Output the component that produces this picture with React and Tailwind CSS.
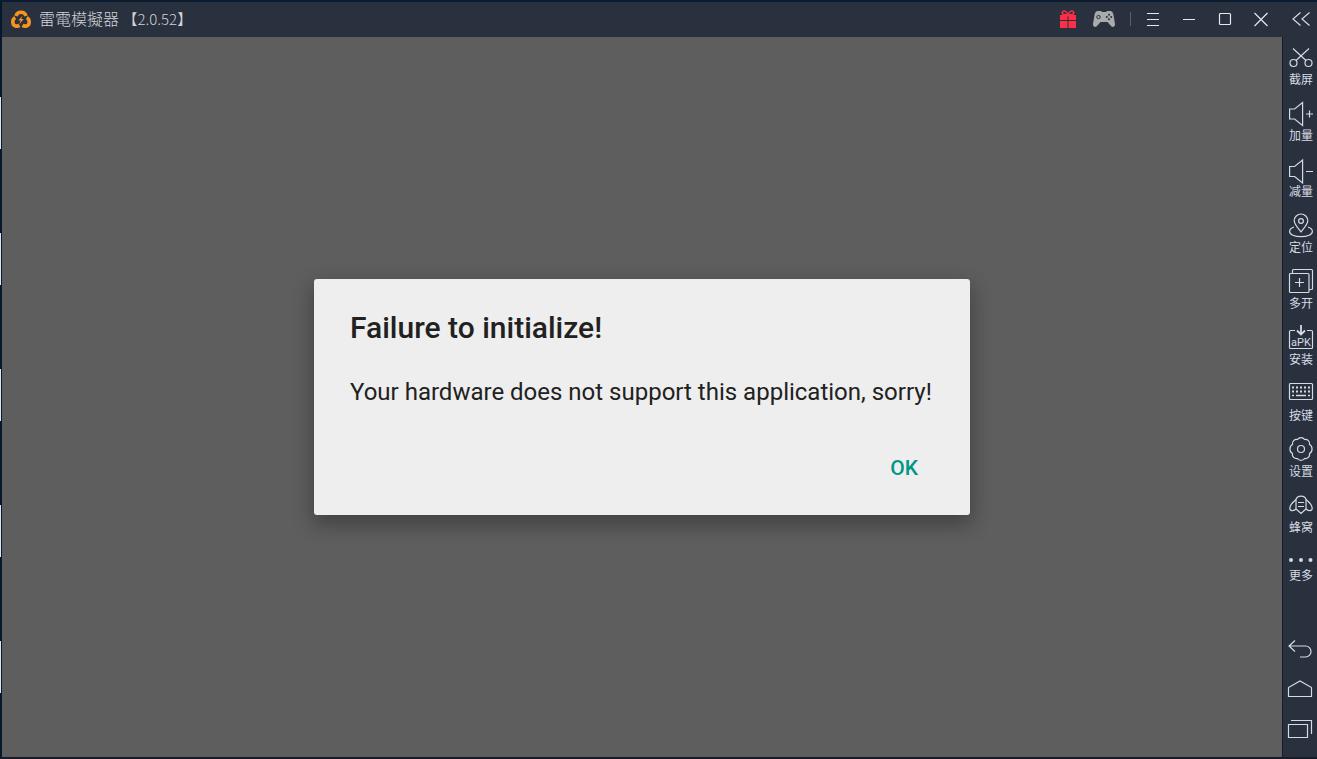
import React, { useState } from 'react';

const Icon = ({ children, className = 'w-6 h-6', viewBox = '0 0 24 24' }) => (
    <svg
        className={className}
        viewBox={viewBox}
        fill="none"
        stroke="currentColor"
        strokeWidth="1.2"
        overflow="visible"
        aria-hidden="true"
    >
        {children}
    </svg>
);

const tools = [
    {
        label: '截屏',
        icon: (
            <>
                <circle cx="4.5" cy="18" r="3.5" />
                <circle cx="19.5" cy="18" r="3.5" />
                <path d="M4 3.5l13 12M20 3.5l-13 12" />
            </>
        ),
    },
    {
        label: '加量',
        icon: <path d="M.6 8h5l8-6.5v23l-8-6.5h-5zM17 13h7M20.5 9.5v7" />,
    },
    {
        label: '减量',
        icon: <path d="M.6 9.5h5l8-6.5v23l-8-6.5h-5zM17 14.5h7" />,
    },
    {
        label: '定位',
        icon: (
            <>
                <path d="M12 19C8 14 5.2 11 5.2 7.8a6.8 6.8 0 0 1 13.6 0C18.8 11 16 14 12 19z" />
                <circle cx="12" cy="8" r="2.4" />
                <path d="M5 14C2 15 .6 16.8.6 18.5c0 3 5 5.2 11.4 5.2s11.4-2.2 11.400-5.2c0-1.700-1.400-3.500-4.400-4.500" />
            </>
        ),
    },
    {
        label: '多开',
        icon: <path d="M1.5 4.5h17.500a1 1 0 0 1 1 1v17a1 1 0 0 1-1 1H1.500a1 1 0 0 1-1-1v-17a1 1 0 0 1 1-1zM3.500 4.500v-3a1 1 0 0 1 1-1h18a1 1 0 0 1 1 1v18a1 1 0 0 1-1 1H20M6 13.500h9M10.500 9v9" />,
    },
    {
        label: '安装',
        icon: (
            <>
                <path d="M6 5.5H1.500a1 1 0 0 0-1 1v16a1 1 0 0 0 1 1h21a1 1 0 0 0 1-1v-16a1 1 0 0 0-1-1H18" />
                <path d="M12 0v9M8 5.500l4 4 4-4" strokeWidth="1.8" />
                <text x="12" y="21" textAnchor="middle" fill="currentColor" stroke="none" fontSize="11" fontFamily="Roboto, sans-serif">aPK</text>
            </>
        ),
    },
    {
        label: '按键',
        icon: (
            <>
                <rect x=".5" y="2.5" width="23" height="16" rx="1" />
                <path d="M3 6.5h18M3 10.500h18" strokeWidth="2" strokeDasharray="2 2" />
                <path d="M3 14.500h2M7 14.500h10M19 14.500h2" strokeWidth="1.5" />
            </>
        ),
    },
    {
        label: '设置',
        icon: (
            <>
                <path d="M8.5 2.500C10 .1 14 .1 15.500 2.500C18.300 1.700 21.300 4.700 20.500 7.500C23.900 9 23.900 15 20.500 16.500C21.300 19.300 18.300 22.300 15.500 21.500C14 23.900 10 23.900 8.500 21.500C5.700 22.300 2.700 19.300 3.500 16.500C.1 15 .1 9 3.500 7.500C2.700 4.700 5.700 1.700 8.500 2.500z" />
                <circle cx="12" cy="12" r="3.5" />
            </>
        ),
    },
    {
        label: '蜂窝',
        icon: (
            <>
                <path d="M7 6.5C8 2 16 2 17 6.500V16l-5 4.500L7 16zM9 9.500h6M9 13.500h6" />
                <path d="M7 6.5C4 9 .8 12.500.8 15.200c0 2.800 3.800 3.300 6.200.8M17 6.500c3 2.500 6.200 6 6.200 8.700 0 2.800-3.800 3.300-6.200.8" />
            </>
        ),
    },
];

const navigation = [
    { name: 'Back', icon: <path d="M7 3.5L1 9l6 5.500M1.500 9h16a5.500 5.500 0 0 1 0 11H12" /> },
    { name: 'Home', icon: <path d="M.5 19.5v-9L12 4l11.500 6.500v9z" /> },
    { name: 'Recent apps', icon: <path d="M.5 7.5h19v13H.5zM3 3.500h20.500V17" /> },
];

const Logo = () => (
    <svg className="w-5 h-5" viewBox="0 0 20 20" fill="none" aria-hidden="true">
        <g stroke="#f7941e" strokeWidth="3.6">
            <path d="M5 7a5.200 5.200 0 0 1 10 0" />
            <path d="M4.200 8.500C1 10.500 1 15.500 4.200 16.800c1.500.6 3 .4 4.300-.4" />
            <path d="M15.800 8.500C19 10.500 19 15.500 15.800 16.800c-1.500.6-3 .4-4.300-.4" />
        </g>
        <path d="M11.500 6.500L7.300 11.500h2.400l-1.500 4 4.500-5.500h-2.500z" fill="#f7941e" />
    </svg>
);

const TitleBar = () => (
    <header className="h-[35px] shrink-0 flex items-center bg-[#29303e] text-[#e4e8ef] pl-[9px] pr-[3px] pb-0.5">
        <Logo />
        <h1 className="ml-2 flex-1 text-base leading-6 font-light text-[#d0d3d9] whitespace-pre">
            雷電模擬器 <span className="text-[15px]">【2.0.52】</span>
        </h1>

        <button aria-label="Gifts" className="w-9 h-8 flex items-center justify-center">
            <svg className="w-4 h-[18px]" viewBox="0 0 16 18" fill="#fb3048" aria-hidden="true">
                <path d="M0 5h7.500v5H0zM8.500 5H16v5H8.500zM0 11h7.500v7H0zM8.500 11H16v7H8.500z" />
                <path d="M8 5C3 5 1.500 3.800 2.500 2S6.500.5 8 5c1.500-4.500 4.500-4.800 5.500-3S13 5 8 5z" fill="none" stroke="#fb3048" strokeWidth="1.5" />
            </svg>
        </button>
        <button aria-label="Gamepad" className="w-9 h-8 flex items-center justify-center">
            <svg className="w-[22px] h-4" viewBox="0 0 22 16" aria-hidden="true">
                <path d="M5 0h3l1 1h4l1-1h3c2 0 3 1.500 3.500 4L22 13c.3 2.500-2 4-4 2l-3.500-4h-7L4 15c-2 2-4.300.5-4-2l1.500-9C2 1.500 3 0 5 0z" fill="#a9aaad" />
                <circle cx="5.5" cy="6" r="1.7" fill="none" stroke="#29303e" strokeWidth="1" />
                <g fill="#29303e">
                    <circle cx="16" cy="3.8" r="1" />
                    <circle cx="16" cy="8.2" r="1" />
                    <circle cx="13.8" cy="6" r="1" />
                    <circle cx="18.2" cy="6" r="1" />
                </g>
            </svg>
        </button>

        <span className="w-px h-[14px] ml-2 mr-1 bg-[#5b616c]" />

        <button aria-label="Menu" className="w-9 h-8 flex items-center justify-center">
            <Icon className="w-3 h-[14px]" viewBox="0 0 12 14"><path d="M0 1.5h12M0 7.500h12M0 13.500h12" strokeWidth="1" /></Icon>
        </button>
        <button aria-label="Minimize" className="w-9 h-8 flex items-center justify-center">
            <Icon className="w-3 h-[14px]" viewBox="0 0 12 14"><path d="M0 7.5h12" strokeWidth="1" /></Icon>
        </button>
        <button aria-label="Maximize" className="w-9 h-8 flex items-center justify-center">
            <Icon className="w-3 h-[14px]" viewBox="0 0 12 14"><rect x=".5" y="1.5" width="11" height="11" rx="1" /></Icon>
        </button>
        <button aria-label="Close" className="w-9 h-8 flex items-center justify-center">
            <Icon className="w-[14px] h-[14px]" viewBox="0 0 14 14"><path d="M.5 1l13 13M13.500 1l-13 13" /></Icon>
        </button>
    </header>
);

const Sidebar = () => (
    <aside className="w-[35px] shrink-0 flex flex-col bg-[#29303e] text-[#d5dae3]">
        <button aria-label="Collapse toolbar" className="h-[35px] shrink-0 flex items-center justify-center pl-[3px] pb-0.5">
            <Icon className="w-[18px] h-[14px]" viewBox="0 0 18 14">
                <path d="M8.5.5L1 7l7.500 6.500M17.500.5L10 7l7.500 6.500" />
            </Icon>
        </button>

        <div className="flex-1 flex flex-col border-l border-[#171c26] pt-2 pb-4">
            <div className="flex flex-col items-center gap-3 pl-0.5">
                {tools.map(tool => (
                    <button key={tool.label} className="flex flex-col items-center">
                        <Icon>{tool.icon}</Icon>
                        <span className="text-xs leading-5 whitespace-nowrap">{tool.label}</span>
                    </button>
                ))}
                <button className="flex flex-col items-center">
                    <Icon className="w-6 h-4" viewBox="0 0 24 16">
                        <g fill="currentColor" stroke="none">
                            <circle cx="2" cy="11" r="2" />
                            <circle cx="12" cy="11" r="2" />
                            <circle cx="21.5" cy="11" r="2" />
                        </g>
                    </Icon>
                    <span className="text-xs leading-5 whitespace-nowrap">更多</span>
                </button>
            </div>

            <nav className="mt-auto flex flex-col items-center gap-4">
                {navigation.map(item => (
                    <button key={item.name} aria-label={item.name}>
                        <Icon>{item.icon}</Icon>
                    </button>
                ))}
            </nav>
        </div>
    </aside>
);

// Sliver of the desktop showing beside the emulator window
const DesktopEdge = () => (
    <div className="w-[2px] shrink-0 bg-[#06182b] pt-[95px] flex flex-col gap-[84px]">
        <span className="w-px h-[52px] bg-[#dfe5ee]" />
        <span className="w-px h-[52px] bg-[#dfe5ee]" />
        <span className="w-px h-[52px] bg-[#dfe5ee]" />
        <span className="w-px h-[52px] bg-[#dfe5ee]" />
        <span className="w-px h-[52px] bg-[#dfe5ee]" />
    </div>
);

const App = () => {
    const [open, setOpen] = useState(true);

    return (
        <div className="min-h-screen flex bg-[#29303e] border-y-2 border-t-[#0b1b30] border-b-[#171c26] font-['Noto_Sans_CJK_TC','Noto_Sans_CJK_SC',sans-serif]">
            <DesktopEdge />

            <div className="flex-1 min-w-0 flex flex-col">
                <TitleBar />

                <main className="flex-1 flex items-center justify-center bg-[#5e5e5e] font-[Roboto,sans-serif]">
                    {open && (
                        <div
                            role="alertdialog"
                            aria-labelledby="dialog-title"
                            aria-describedby="dialog-message"
                            className="w-full max-w-[656px] px-9 pt-[31px] pb-[23px] rounded-[3px] bg-[#eeeeee] text-[#212121] shadow-[0_8px_20px_2px_rgba(0,0,0,0.3)]"
                        >
                            <h2 id="dialog-title" className="text-[30px] leading-9 font-medium">Failure to initialize!</h2>
                            <p id="dialog-message" className="mt-[30px] text-2xl leading-8">Your hardware does not support this application, sorry!</p>
                            <div className="mt-9 flex justify-end">
                                <button
                                    onClick={() => setOpen(false)}
                                    className="h-12 px-4 text-[21px] leading-6 font-medium text-[#009688]"
                                >
                                    OK
                                </button>
                            </div>
                        </div>
                    )}
                </main>
            </div>

            <Sidebar />
        </div>
    );
};

export default App;
